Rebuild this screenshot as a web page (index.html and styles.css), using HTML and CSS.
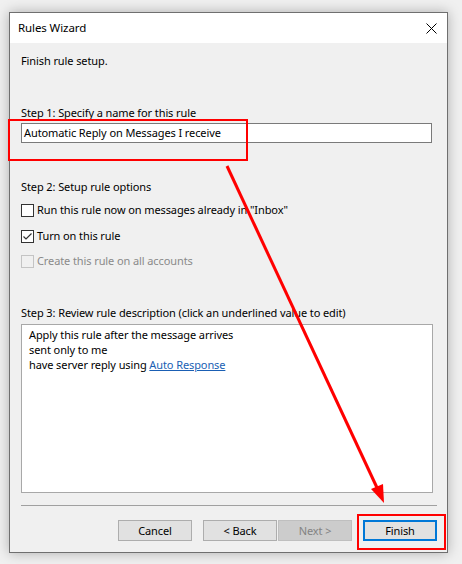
FILE: index.html
```html
<!DOCTYPE html>
<html>
<head>
<meta charset="utf-8">
<link rel="stylesheet" href="styles.css">
</head>
<body>
<div class="window">
  <div class="titlebar">
    <span class="title">Rules Wizard</span>
    <svg class="close" width="11" height="11" viewBox="0 0 11 11"><path d="M0.5 0.5 L10.5 10.5 M10.5 0.5 L0.5 10.5" stroke="#000" stroke-width="1"/></svg>
  </div>
  <div class="content">
    <div class="label intro">Finish rule setup.</div>
    <div class="label step1">Step 1: Specify a name for this rule</div>
    <div class="input">Automatic Reply on Messages I receive</div>
    <div class="label step2">Step 2: Setup rule options</div>
    <div class="check first"><span class="box"></span><span>Run this rule now on messages already in "Inbox"</span></div>
    <div class="check second"><span class="box"><svg width="11" height="11" viewBox="0 0 11 11"><path d="M1.5 5.5 L4 8 L9.5 2.5" fill="none" stroke="#333" stroke-width="1.2"/></svg></span><span>Turn on this rule</span></div>
    <div class="check third disabled"><span class="box"></span><span>Create this rule on all accounts</span></div>
    <div class="label step3">Step 3: Review rule description (click an underlined value to edit)</div>
    <div class="desc">
      <div class="line">Apply this rule after the message arrives</div>
      <div class="line">sent only to me</div>
      <div class="line">have server reply using <span class="link">Auto Response</span></div>
    </div>
    <div class="sep"></div>
    <div class="buttons">
      <div class="btn">Cancel</div>
      <div class="pair">
        <div class="btn">&lt; Back</div>
        <div class="btn disabled">Next &gt;</div>
      </div>
      <div class="btn default">Finish</div>
    </div>
  </div>
</div>
<div class="annot box1"></div>
<div class="annot box2"></div>
<svg class="arrow" width="462" height="564" viewBox="0 0 462 564">
  <line x1="227" y1="166" x2="379" y2="492" stroke="#ff0000" stroke-width="3"/>
  <polygon points="384,503 371,489 383,484" fill="#ff0000"/>
</svg>
</body>
</html>
```
FILE: styles.css
```css
html, body {
  margin: 0;
  padding: 0;
}
body {
  background: #f0f0f0;
  width: 462px;
  height: 564px;
  overflow: hidden;
  position: relative;
  font-family: "Noto Sans", "Open Sans", sans-serif;
  font-size: 11px;
  letter-spacing: -0.1px;
  color: #000;
}
.window {
  margin: 12px 0 0 9px;
  width: 437px;
  height: 539px;
  border: 1px solid #6f6f6f;
  background: #f0f0f0;
  box-shadow: 0 0 12px rgba(0,0,0,0.28);
  display: flex;
  flex-direction: column;
}
.titlebar {
  height: 30px;
  background: #fff;
  display: flex;
  align-items: center;
  justify-content: space-between;
  padding: 0 10px 0 8px;
}
.title {
  font-size: 11.5px;
  line-height: 16px;
}
.close {
  display: block;
}
.content {
  padding: 10px 0 0 11px;
  display: flex;
  flex-direction: column;
}
.label {
  line-height: 16px;
  height: 16px;
  white-space: nowrap;
}
.step1, .step2, .step3 {
  margin-top: 36px;
}
.input {
  margin-top: 2px;
  width: 407px;
  height: 18px;
  border: 1px solid #7a7a7a;
  background: #fff;
  line-height: 18px;
  padding-left: 2px;
  white-space: nowrap;
}
.check {
  display: flex;
  align-items: center;
  height: 16px;
  line-height: 16px;
  gap: 3px;
  white-space: nowrap;
}
.check.first { margin-top: 7px; }
.check.second { margin-top: 10px; }
.check.third { margin-top: 9px; }
.box {
  width: 11px;
  height: 11px;
  border: 1px solid #333;
  background: #fff;
  display: flex;
  align-items: center;
  justify-content: center;
}
.box svg { display: block; }
.check.disabled { color: #8a8a8a; }
.check.disabled .box {
  border-color: #c4c4c4;
  background: #f0f0f0;
}
.desc {
  margin-top: 3px;
  width: 412px;
  height: 169px;
  border: 1px solid #a8a8a8;
  background: #fff;
  padding: 2px 0 0 7px;
  box-sizing: border-box;
  white-space: nowrap;
}
.line {
  line-height: 15px;
  height: 15px;
}
.link {
  color: #1a5fb4;
  text-decoration: underline;
}
.sep {
  margin-top: 12px;
  width: 416px;
  height: 1px;
  background: #a0a0a0;
}
.buttons {
  margin-top: 14px;
  width: 416px;
  display: flex;
  justify-content: flex-end;
  gap: 11px;
}
.pair {
  display: flex;
  gap: 1px;
}
.btn {
  width: 72px;
  height: 19px;
  border: 1px solid #adadad;
  background: #e1e1e1;
  text-align: center;
  line-height: 19px;
}
.btn.disabled {
  background: #cccccc;
  border-color: #bfbfbf;
  color: #838383;
}
.btn.default {
  border: 2px solid #0078d7;
  width: 70px;
  height: 17px;
  line-height: 17px;
}
.annot {
  position: absolute;
  border: 2px solid #ff0000;
  box-sizing: border-box;
}
.box1 {
  left: 8px;
  top: 119px;
  width: 240px;
  height: 42px;
}
.box2 {
  left: 357px;
  top: 514px;
  width: 89px;
  height: 36px;
}
.arrow {
  position: absolute;
  left: 0;
  top: 0;
  pointer-events: none;
}
```
